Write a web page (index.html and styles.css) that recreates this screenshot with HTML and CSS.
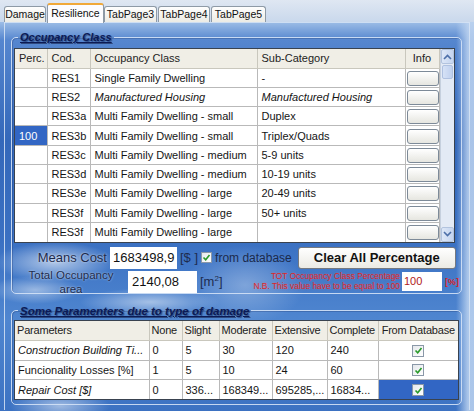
FILE: index.html
```html
<!DOCTYPE html>
<html>
<head>
<meta charset="utf-8">
<link rel="stylesheet" href="styles.css">
</head>
<body>
<div class="tabs">
  <div class="tab t1">Damage</div>
  <div class="tab t2 active">Resilience</div>
  <div class="tab t3">TabPage3</div>
  <div class="tab t4">TabPage4</div>
  <div class="tab t5">TabPage5</div>
</div>
<div class="page">
  <fieldset class="group g1">
    <legend>Occupancy Class</legend>
    <div class="grid occgrid">
      <table class="occ">
        <colgroup><col class="c-perc"><col class="c-cod"><col class="c-occ"><col class="c-sub"><col class="c-info"></colgroup>
        <thead>
          <tr><th>Perc.</th><th>Cod.</th><th>Occupancy Class</th><th>Sub-Category</th><th class="ctr">Info</th></tr>
        </thead>
        <tbody>
          <tr><td></td><td>RES1</td><td>Single Family Dwelling</td><td>-</td><td class="ib"><span class="infobtn"></span></td></tr>
          <tr><td></td><td>RES2</td><td class="it">Manufactured Housing</td><td class="it">Manufactured Housing</td><td class="ib"><span class="infobtn"></span></td></tr>
          <tr><td></td><td>RES3a</td><td>Multi Family Dwelling - small</td><td>Duplex</td><td class="ib"><span class="infobtn"></span></td></tr>
          <tr><td class="sel">100</td><td>RES3b</td><td>Multi Family Dwelling - small</td><td>Triplex/Quads</td><td class="ib"><span class="infobtn"></span></td></tr>
          <tr><td></td><td>RES3c</td><td>Multi Family Dwelling - medium</td><td>5-9 units</td><td class="ib"><span class="infobtn"></span></td></tr>
          <tr><td></td><td>RES3d</td><td>Multi Family Dwelling - medium</td><td>10-19 units</td><td class="ib"><span class="infobtn"></span></td></tr>
          <tr><td></td><td>RES3e</td><td>Multi Family Dwelling - large</td><td>20-49 units</td><td class="ib"><span class="infobtn"></span></td></tr>
          <tr><td></td><td>RES3f</td><td>Multi Family Dwelling - large</td><td>50+ units</td><td class="ib"><span class="infobtn"></span></td></tr>
          <tr><td></td><td>RES3f</td><td>Multi Family Dwelling - large</td><td></td><td class="ib"><span class="infobtn"></span></td></tr>
        </tbody>
      </table>
      <div class="vscroll">
        <div class="sbtn"><svg width="9" height="6" viewBox="0 0 9 6"><path d="M1 5 L4.5 1.5 L8 5" fill="none" stroke="#4d6fa8" stroke-width="1.6"/></svg></div>
        <div class="thumb"></div>
        <div class="track"></div>
        <div class="sbtn"><svg width="9" height="6" viewBox="0 0 9 6"><path d="M1 1 L4.5 4.5 L8 1" fill="none" stroke="#4d6fa8" stroke-width="1.6"/></svg></div>
      </div>
    </div>
    <div class="row r-cost">
      <span class="lbl cost-lbl">Means Cost</span>
      <span class="tb tb-cost">1683498,9</span>
      <span class="unit">[$ ]</span>
      <span class="chk"><svg width="9" height="9" viewBox="0 0 9 9"><path d="M1.5 4.5 L3.7 6.8 L7.5 2" fill="none" stroke="#2a9a2a" stroke-width="1.6"/></svg></span>
      <span class="fromdb">from database</span>
      <span class="btn">Clear All Percentage</span>
    </div>
    <div class="row r-area">
      <span class="lbl area-lbl"><span class="ln">Total Occupancy</span><span class="ln">area</span></span>
      <span class="tb tb-area">2140,08</span>
      <span class="unit">[m<sup>2</sup>]</span>
      <span class="warn">TOT Occupancy Class Percentage<br>N.B. This value have to be equal to 100</span>
      <span class="tb tb-pct">100</span>
      <span class="pct">[%]</span>
    </div>
  </fieldset>
  <fieldset class="group g2">
    <legend>Some Paramenters due to type of damage</legend>
    <div class="grid pargrid">
      <table class="par">
        <colgroup><col class="p-name"><col class="p-none"><col class="p-sl"><col class="p-mod"><col class="p-ext"><col class="p-com"><col class="p-db"></colgroup>
        <thead>
          <tr><th>Parameters</th><th>None</th><th>Slight</th><th>Moderate</th><th>Extensive</th><th>Complete</th><th class="ctr">From Database</th></tr>
        </thead>
        <tbody>
          <tr><td class="it">Construction Building Ti...</td><td>0</td><td>5</td><td>30</td><td>120</td><td>240</td><td class="ctr"><span class="chk"><svg width="9" height="9" viewBox="0 0 9 9"><path d="M1.5 4.5 L3.7 6.8 L7.5 2" fill="none" stroke="#2a9a2a" stroke-width="1.6"/></svg></span></td></tr>
          <tr><td>Funcionality Losses [%]</td><td>1</td><td>5</td><td>10</td><td>24</td><td>60</td><td class="ctr"><span class="chk"><svg width="9" height="9" viewBox="0 0 9 9"><path d="M1.5 4.5 L3.7 6.8 L7.5 2" fill="none" stroke="#2a9a2a" stroke-width="1.6"/></svg></span></td></tr>
          <tr><td class="it">Repair Cost [$]</td><td>0</td><td>336...</td><td>168349...</td><td>695285,...</td><td>16834...</td><td class="ctr sel"><span class="chk"><svg width="9" height="9" viewBox="0 0 9 9"><path d="M1.5 4.5 L3.7 6.8 L7.5 2" fill="none" stroke="#2a9a2a" stroke-width="1.6"/></svg></span></td></tr>
        </tbody>
      </table>
    </div>
  </fieldset>
</div>
</body>
</html>
```
FILE: styles.css
```css
* { box-sizing: border-box; }
html, body { margin: 0; padding: 0; }
body {
  width: 474px;
  height: 411px;
  overflow: hidden;
  font-family: "Liberation Sans", Arial, sans-serif;
  font-size: 11px;
  color: #151515;
  background:
    radial-gradient(60px 20px at 55px 262px, rgba(255,255,255,.6), rgba(255,255,255,0)),
    radial-gradient(45px 14px at 35px 290px, rgba(255,255,255,.45), rgba(255,255,255,0)),
    radial-gradient(70px 14px at 150px 302px, rgba(255,255,255,.5), rgba(255,255,255,0)),
    radial-gradient(60px 40px at 245px 285px, rgba(255,255,255,.3), rgba(255,255,255,0)),
    radial-gradient(50px 16px at 60px 406px, rgba(255,255,255,.5), rgba(255,255,255,0)),
    linear-gradient(90deg, rgba(190,212,240,0) 456px, rgba(190,212,240,.85) 468px),
    linear-gradient(180deg, #9dbde6 22px, #5586cf 40px, #3468ba 140px, #3a70c2 240px, #4f86d0 320px, #3c72c2 411px);
}

/* tabs */
.tabs {
  height: 22px;
  display: flex;
  align-items: flex-end;
  padding-left: 4px;
  background: linear-gradient(180deg, #dfe7f2, #c9d8ec);
  position: relative;
  z-index: 2;
}
.tab {
  height: 16px;
  border: 1px solid #8e9aa6;
  border-bottom: none;
  border-radius: 3px 3px 0 0;
  background: linear-gradient(180deg, #fefefe, #ecebe4);
  font-size: 10.5px;
  line-height: 15px;
  text-align: center;
  color: #111;
  margin-right: 1px;
}
.t1 { width: 42px; }
.t2 { width: 57px; margin-right: 0; }
.t3 { width: 53px; margin-right: 1px; }
.t4 { width: 52px; }
.t5 { width: 55px; }
.tab.active {
  height: 20px;
  margin-bottom: -1px;
  background: #fcfcfe;
  border-top: 2px solid #f0a838;
  line-height: 16px;
}

/* page */
.page {
  margin: 0 4px 0 4px;
  height: 388px;
  border: 1px solid rgba(215,228,245,.85);
  border-bottom: none;
  padding-top: 0;
  display: flow-root;
}

.group {
  margin: 7px 7px 0 6px;
  padding: 4px 2px 0 2px;
  border: 1px solid rgba(212,226,246,.9);
  border-radius: 5px;
  min-width: 0;
  box-shadow: inset 1px 1px 0 rgba(20,40,90,.25);
}
.group legend {
  margin-left: 4px;
  padding: 0 2px;
  font-weight: bold;
  font-style: italic;
  text-decoration: underline;
  font-size: 11.5px;
  line-height: 14px;
  color: #0b1a55;
  text-shadow: 1px 1px 1px rgba(0,0,30,.45);
}
.g1 legend { font-size: 11px; }
.g2 { margin-top: 10px; padding-top: 2px; padding-bottom: 4px; }

/* grids */
.grid {
  display: flex;
  border: 1px solid #39424f;
  background: #fff;
}
.occgrid { width: 441px; }
.pargrid { width: 445px; }
table {
  border-collapse: collapse;
  table-layout: fixed;
  background: #fff;
}
.occ { width: 424px; }
.par { width: 443px; }
.c-perc { width: 32px; }
.c-cod { width: 43px; }
.c-occ { width: 167px; }
.c-sub { width: 148px; }
.c-info { width: 34px; }

th, td {
  border: 1px solid #b9b9b9;
  padding: 0 4px;
  white-space: nowrap;
  overflow: hidden;
  text-align: left;
  font-weight: normal;
}
th {
  background: #f0eee6;
  border-color: #c9c7bd;
  color: #222;
}
tr > :first-child { border-left: none; }
thead tr th { border-top: none; }
.occ thead tr { height: 19px; }
.occ tbody tr { height: 19.3px; }
.occ tbody tr:last-child td { border-bottom: none; }
.ctr { text-align: center; }
.it { font-style: italic; }
td.sel { background: #3266c4; color: #fff; }
td.ib { padding: 0 1px; text-align: center; }
.infobtn {
  display: block;
  width: 32px;
  height: 15px;
  margin: 1px auto 0;
  border: 1px solid #7d8a98;
  border-radius: 3px;
  background: linear-gradient(180deg, #ffffff, #e6e6e0);
}

/* scrollbar */
.vscroll {
  width: 15px;
  display: flex;
  flex-direction: column;
  background: #e3eaf5;
  border-left: 1px solid #c6d0de;
}
.sbtn {
  height: 15px;
  display: flex;
  align-items: center;
  justify-content: center;
  background: linear-gradient(90deg, #dde7f7, #c4d4ef);
  border: 1px solid #b2c3de;
  border-radius: 2px;
}
.thumb {
  height: 14px;
  margin: 1px 1px 0;
  background: linear-gradient(90deg, #d6e2f6, #bfd0ee);
  border: 1px solid #afc1e0;
  border-radius: 2px;
}
.track { flex: 1; }

/* rows under occupancy grid */
.row {
  display: flex;
  align-items: center;
  height: 22px;
  color: #1b2a4c;
  font-size: 13px;
}
.r-cost { margin-top: 4px; }
.r-area { margin-top: 2px; }
.lbl { text-shadow: 0 0 2px rgba(255,255,255,.7); }
.cost-lbl { width: 93px; text-align: right; }
.area-lbl {
  width: 114px;
  display: flex;
  flex-direction: column;
  align-items: center;
  font-size: 11.5px;
  line-height: 14px;
}
.ln { display: block; height: 14px; }
.tb {
  height: 22px;
  background: #fff;
  color: #111;
  line-height: 22px;
  padding-left: 3px;
}
.tb-cost { width: 67px; margin-left: 3px; }
.tb-area { width: 69px; margin-left: 0; padding-left: 4px; }
.tb-pct { width: 40px; height: 19px; line-height: 19px; margin-left: 2px; font-size: 11px; color: #b02020; padding-left: 2px; }
.unit { margin-left: 3px; color: #1e2c4e; }
.unit sup { font-size: 8px; }
.chk {
  display: inline-flex;
  width: 11px;
  height: 11px;
  border: 1px solid #8a98a8;
  background: linear-gradient(135deg, #e4e8ec, #ffffff);
  align-items: center;
  justify-content: center;
  vertical-align: middle;
}
.r-cost .chk { margin-left: 3px; }
.fromdb { margin-left: 3px; font-size: 12px; color: #1b2a4c; }
.btn {
  margin-left: 6px;
  width: 158px;
  height: 22px;
  border: 1px solid #76797f;
  border-radius: 3px;
  background: linear-gradient(180deg, #ffffff, #ebeae4);
  text-align: center;
  line-height: 20px;
  font-weight: bold;
  color: #111;
}
.warn {
  flex: 1;
  text-align: right;
  font-size: 8.4px;
  line-height: 9.5px;
  color: #d8262c;
  text-shadow: 0 0 2px rgba(255,120,120,.6);
}
.pct { margin-left: 3px; font-size: 9px; color: #d8262c; font-weight: bold; }

/* parameters table */
.p-name { width: 134px; }
.p-none { width: 33px; }
.p-sl { width: 37px; }
.p-mod { width: 53px; }
.p-ext { width: 55px; }
.p-com { width: 51px; }
.p-db { width: 80px; }
.par th, .par td { padding: 0 3px; }
.par th { padding: 0 2px; letter-spacing: -0.2px; }
.par thead tr { height: 20px; }
.par tbody tr { height: 19.5px; }
.par tr > :last-child { border-right: none; }
.par tbody tr:last-child td { border-bottom: none; }
.par td.ctr { text-align: center; }
.par .chk { width: 12px; height: 12px; }
```
